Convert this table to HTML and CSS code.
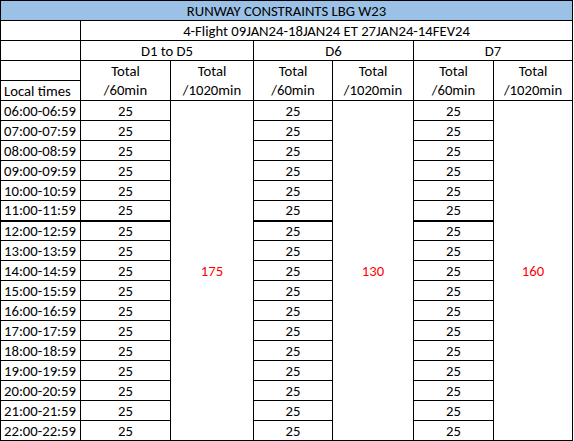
FILE: index.html
```html
<!DOCTYPE html>
<html>
<head>
<meta charset="utf-8">
<link rel="stylesheet" href="styles.css">
</head>
<body>
<table class="sheet">
  <colgroup>
    <col class="c-time"><col class="c-a"><col class="c-b"><col class="c-c"><col class="c-d"><col class="c-e"><col class="c-f">
  </colgroup>
  <tr class="title"><td colspan="7">RUNWAY CONSTRAINTS LBG W23</td></tr>
  <tr><td></td><td colspan="6">4-Flight 09JAN24-18JAN24 ET 27JAN24-14FEV24</td></tr>
  <tr><td></td><td colspan="2">D1 to D5</td><td colspan="2">D6</td><td colspan="2">D7</td></tr>
  <tr class="tot"><td></td><td>Total</td><td>Total</td><td>Total</td><td>Total</td><td>Total</td><td>Total</td></tr>
  <tr class="unit"><td class="lbl">Local times</td><td>/60min</td><td>/1020min</td><td>/60min</td><td>/1020min</td><td>/60min</td><td>/1020min</td></tr>
  <tr><td class="lbl">06:00-06:59</td><td>25</td><td class="merged" rowspan="17">175</td><td>25</td><td class="merged" rowspan="17">130</td><td>25</td><td class="merged" rowspan="17">160</td></tr>
  <tr><td class="lbl">07:00-07:59</td><td>25</td><td>25</td><td>25</td></tr>
  <tr><td class="lbl">08:00-08:59</td><td>25</td><td>25</td><td>25</td></tr>
  <tr><td class="lbl">09:00-09:59</td><td>25</td><td>25</td><td>25</td></tr>
  <tr><td class="lbl">10:00-10:59</td><td>25</td><td>25</td><td>25</td></tr>
  <tr><td class="lbl">11:00-11:59</td><td>25</td><td>25</td><td>25</td></tr>
  <tr class="thick"><td class="lbl">12:00-12:59</td><td>25</td><td>25</td><td>25</td></tr>
  <tr><td class="lbl">13:00-13:59</td><td>25</td><td>25</td><td>25</td></tr>
  <tr><td class="lbl">14:00-14:59</td><td>25</td><td>25</td><td>25</td></tr>
  <tr><td class="lbl">15:00-15:59</td><td>25</td><td>25</td><td>25</td></tr>
  <tr><td class="lbl">16:00-16:59</td><td>25</td><td>25</td><td>25</td></tr>
  <tr><td class="lbl">17:00-17:59</td><td>25</td><td>25</td><td>25</td></tr>
  <tr><td class="lbl">18:00-18:59</td><td>25</td><td>25</td><td>25</td></tr>
  <tr><td class="lbl">19:00-19:59</td><td>25</td><td>25</td><td>25</td></tr>
  <tr><td class="lbl">20:00-20:59</td><td>25</td><td>25</td><td>25</td></tr>
  <tr><td class="lbl">21:00-21:59</td><td>25</td><td>25</td><td>25</td></tr>
  <tr><td class="lbl">22:00-22:59</td><td>25</td><td>25</td><td>25</td></tr>
</table>
</body>
</html>
```
FILE: styles.css
```css
html, body {
  margin: 0;
  padding: 0;
  background: #ffffff;
}
.sheet {
  border-collapse: collapse;
  table-layout: fixed;
  width: 573px;
  font-family: Carlito, Lato, "Liberation Sans", sans-serif;
  font-size: 14.7px;
  color: #000;
}
.c-time { width: 80px; }
.c-a { width: 90px; }
.c-b { width: 83px; }
.c-c { width: 79px; }
.c-d { width: 81px; }
.c-e { width: 80px; }
.c-f { width: 79px; }
.sheet tr { height: 20px; }
.sheet td {
  border: 1px solid #000;
  padding: 0;
  text-align: center;
  vertical-align: middle;
  line-height: 18px;
  white-space: nowrap;
  overflow: hidden;
}
.sheet td.lbl {
  text-align: left;
  padding-left: 3px;
}
.title td {
  background: #9bc2e6;
}
.tot td + td {
  border-bottom: none;
}
.unit td + td {
  border-top: none;
}
.thick td {
  border-top: 2px solid #000;
}
.sheet td.merged {
  color: #ff0000;
}
```
